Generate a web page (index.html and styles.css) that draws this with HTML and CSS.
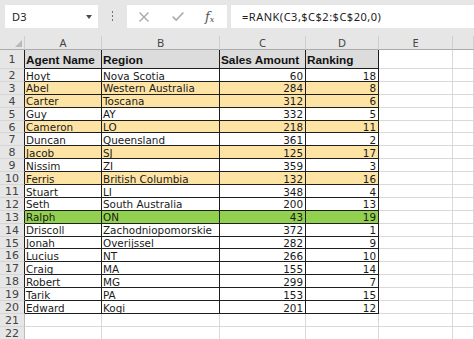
FILE: index.html
```html
<!DOCTYPE html>
<html lang="en">
<head>
<meta charset="utf-8">
<title>Excel RANK</title>
<link rel="stylesheet" href="styles.css">
</head>
<body>
<div class="app">
  <div class="fbar">
    <div class="namebox"><span class="ref">D3</span><span class="caret"></span></div>
    <div class="grip"><i></i><i></i><i></i></div>
    <div class="btns">
      <svg class="ic-x" width="10" height="10" viewBox="0 0 10 10"><path d="M0.5 0.5L9.5 9.5M9.5 0.5L0.5 9.5" stroke="#a8a8a8" stroke-width="1.4" fill="none"/></svg>
      <svg class="ic-ok" width="12" height="9" viewBox="0 0 12 9"><path d="M0.6 4.6L4.2 8.1L11.4 0.6" stroke="#a8a8a8" stroke-width="1.5" fill="none"/></svg>
      <span class="fx"><span class="fx-f">f</span><span class="fx-x">x</span></span>
    </div>
    <div class="formula">=RANK(C3,$C$2:$C$20,0)</div>
  </div>
  <div class="sheet">
    <div class="row">
      <div class="corner"><svg width="7" height="7" viewBox="0 0 7 7"><path d="M7 0V7H0Z" fill="#b9b9b9"/></svg></div>
      <div class="ch">A</div><div class="ch">B</div><div class="ch">C</div><div class="ch">D</div><div class="ch">E</div><div class="ch"></div>
    </div>
    <div class="row hd"><div class="rh t">1</div><div class="c t">Agent Name</div><div class="c t">Region</div><div class="c t">Sales Amount</div><div class="c t">Ranking</div><div class="c"></div><div class="c"></div></div>
    <div class="row"><div class="rh t">2</div><div class="c t">Hoyt</div><div class="c t">Nova Scotia</div><div class="c t n">60</div><div class="c t n">18</div><div class="c"></div><div class="c"></div></div>
    <div class="row or"><div class="rh t">3</div><div class="c t">Abel</div><div class="c t">Western Australia</div><div class="c t n">284</div><div class="c t n">8</div><div class="c"></div><div class="c"></div></div>
    <div class="row or"><div class="rh t">4</div><div class="c t">Carter</div><div class="c t">Toscana</div><div class="c t n">312</div><div class="c t n">6</div><div class="c"></div><div class="c"></div></div>
    <div class="row"><div class="rh t">5</div><div class="c t">Guy</div><div class="c t">AY</div><div class="c t n">332</div><div class="c t n">5</div><div class="c"></div><div class="c"></div></div>
    <div class="row or"><div class="rh t">6</div><div class="c t">Cameron</div><div class="c t">LO</div><div class="c t n">218</div><div class="c t n">11</div><div class="c"></div><div class="c"></div></div>
    <div class="row"><div class="rh t">7</div><div class="c t">Duncan</div><div class="c t">Queensland</div><div class="c t n">361</div><div class="c t n">2</div><div class="c"></div><div class="c"></div></div>
    <div class="row or"><div class="rh t">8</div><div class="c t">Jacob</div><div class="c t">SJ</div><div class="c t n">125</div><div class="c t n">17</div><div class="c"></div><div class="c"></div></div>
    <div class="row"><div class="rh t">9</div><div class="c t">Nissim</div><div class="c t">ZI</div><div class="c t n">359</div><div class="c t n">3</div><div class="c"></div><div class="c"></div></div>
    <div class="row or"><div class="rh t">10</div><div class="c t">Ferris</div><div class="c t">British Columbia</div><div class="c t n">132</div><div class="c t n">16</div><div class="c"></div><div class="c"></div></div>
    <div class="row"><div class="rh t">11</div><div class="c t">Stuart</div><div class="c t">LI</div><div class="c t n">348</div><div class="c t n">4</div><div class="c"></div><div class="c"></div></div>
    <div class="row"><div class="rh t">12</div><div class="c t">Seth</div><div class="c t">South Australia</div><div class="c t n">200</div><div class="c t n">13</div><div class="c"></div><div class="c"></div></div>
    <div class="row gr"><div class="rh t">13</div><div class="c t">Ralph</div><div class="c t">ON</div><div class="c t n">43</div><div class="c t n">19</div><div class="c"></div><div class="c"></div></div>
    <div class="row"><div class="rh t">14</div><div class="c t">Driscoll</div><div class="c t">Zachodniopomorskie</div><div class="c t n">372</div><div class="c t n">1</div><div class="c"></div><div class="c"></div></div>
    <div class="row"><div class="rh t">15</div><div class="c t">Jonah</div><div class="c t">Overijssel</div><div class="c t n">282</div><div class="c t n">9</div><div class="c"></div><div class="c"></div></div>
    <div class="row"><div class="rh t">16</div><div class="c t">Lucius</div><div class="c t">NT</div><div class="c t n">266</div><div class="c t n">10</div><div class="c"></div><div class="c"></div></div>
    <div class="row"><div class="rh t">17</div><div class="c t">Craig</div><div class="c t">MA</div><div class="c t n">155</div><div class="c t n">14</div><div class="c"></div><div class="c"></div></div>
    <div class="row"><div class="rh t">18</div><div class="c t">Robert</div><div class="c t">MG</div><div class="c t n">299</div><div class="c t n">7</div><div class="c"></div><div class="c"></div></div>
    <div class="row"><div class="rh t">19</div><div class="c t">Tarik</div><div class="c t">PA</div><div class="c t n">153</div><div class="c t n">15</div><div class="c"></div><div class="c"></div></div>
    <div class="row"><div class="rh t">20</div><div class="c t">Edward</div><div class="c t">Kogi</div><div class="c t n">201</div><div class="c t n">12</div><div class="c"></div><div class="c"></div></div>
    <div class="row"><div class="rh">21</div><div class="c"></div><div class="c"></div><div class="c"></div><div class="c"></div><div class="c"></div><div class="c"></div></div>
    <div class="row"><div class="rh">22</div><div class="c"></div><div class="c"></div><div class="c"></div><div class="c"></div><div class="c"></div><div class="c"></div></div>
  </div>
</div>
</body>
</html>
```

FILE: styles.css
```css
html, body {
  margin: 0;
  padding: 0;
}
body {
  width: 474px;
  height: 339px;
  overflow: hidden;
  background: #ffffff;
  font-family: "DejaVu Sans", sans-serif;
}
.app {
  width: 474px;
  height: 339px;
  overflow: hidden;
}

/* formula bar */
.fbar {
  display: flex;
  align-items: flex-start;
  height: 36px;
  box-sizing: border-box;
  padding: 5px 0 0 5px;
  background: #e6e6e6;
}
.namebox {
  width: 93px;
  height: 23px;
  box-sizing: border-box;
  background: #ffffff;
  display: flex;
  align-items: center;
  padding-left: 7px;
}
.ref {
  font-family: "Noto Sans", sans-serif;
  font-size: 11px;
  letter-spacing: 0.3px;
  color: #222;
}
.caret {
  margin-left: auto;
  margin-right: 6px;
  width: 0;
  height: 0;
  border-left: 3.5px solid transparent;
  border-right: 3.5px solid transparent;
  border-top: 4px solid #4a4a4a;
}
.grip {
  width: 29px;
  height: 23px;
  display: flex;
  flex-direction: column;
  align-items: center;
  padding-top: 6px;
  box-sizing: border-box;
  gap: 2.5px;
}
.grip i {
  display: block;
  width: 1.5px;
  height: 1.5px;
  background: #707070;
}
.btns {
  width: 100px;
  height: 23px;
  box-sizing: border-box;
  background: #ffffff;
  margin-right: 4px;
  display: flex;
  align-items: center;
  padding-left: 12px;
}
.ic-ok {
  margin-left: 23px;
}
.fx {
  margin-left: 21px;
  font-family: "DejaVu Serif", "Liberation Serif", serif;
  font-style: italic;
  color: #555;
  display: flex;
  align-items: baseline;
}
.fx-f {
  font-size: 13px;
}
.fx-x {
  font-size: 8px;
  position: relative;
  top: 1px;
}
.formula {
  flex: 1;
  height: 23px;
  box-sizing: border-box;
  background: #ffffff;
  display: flex;
  align-items: center;
  padding-left: 11px;
  font-family: "Noto Sans", sans-serif;
  font-size: 11px;
  letter-spacing: 0.5px;
  color: #222;
  white-space: nowrap;
}

/* sheet grid */
.sheet {
  display: grid;
  grid-template-columns: 25px 77px 118px 86px 73px 74px 1fr;
  grid-template-rows: 14px 19px repeat(21, 12.9px);
}
.row {
  display: contents;
}
.corner {
  background: #e6e6e6;
  border-right: 1px solid #cfcfcf;
  border-bottom: 1px solid #ababab;
  box-sizing: border-box;
  display: flex;
  align-items: flex-end;
  justify-content: flex-end;
  padding: 0 2px 2px 0;
}
.ch {
  background: #e6e6e6;
  border-right: 1px solid #cfcfcf;
  border-bottom: 1px solid #ababab;
  box-sizing: border-box;
  text-align: center;
  font-family: "Noto Sans", sans-serif;
  font-size: 11px;
  line-height: 13px;
  color: #444;
}
.rh {
  background: #e6e6e6;
  border-right: 1px solid #bdbdbd;
  border-bottom: 1px solid #d6d6d6;
  box-sizing: border-box;
  text-align: center;
  font-family: "DejaVu Sans", sans-serif;
  font-size: 11px;
  line-height: 12px;
  padding-top: 1px;
  color: #444;
}
.rh.t {
  border-right-color: #1e1e1e;
}
.hd .rh {
  padding-top: 4px;
}
.c {
  border-right: 1px solid #d9d9d9;
  border-bottom: 1px solid #d9d9d9;
  box-sizing: border-box;
  font-family: "DejaVu Sans", sans-serif;
  font-size: 10.4px;
  line-height: 11px;
  padding: 1.5px 2px 0 1px;
  white-space: nowrap;
  color: #1a1a1a;
}
.c.t {
  border-right-color: #1e1e1e;
  border-bottom-color: #1e1e1e;
}
.n {
  text-align: right;
}
.hd .c.t {
  background: #dcdcdc;
  font-family: "Liberation Sans", Arial, sans-serif;
  font-weight: bold;
  font-size: 11.8px;
  line-height: 15px;
  padding-top: 3px;
  color: #111;
}
.or .c.t {
  background: #fde4a5;
}
.gr .c.t {
  background: #92d050;
}
```
